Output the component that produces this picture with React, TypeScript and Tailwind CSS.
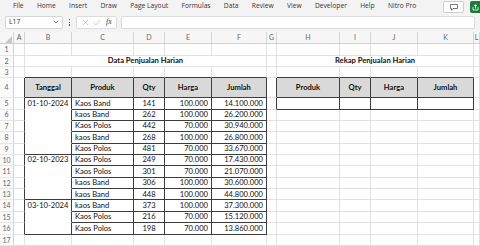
import React from "react";

const cols = ["", "A", "B", "C", "D", "E", "F", "G", "H", "I", "J", "K", "L"];

type Row = { tgl?: string; produk: string; qty: number; harga: string; jumlah: string };

const data: Row[] = [
  { tgl: "01-10-2024", produk: "Kaos Band", qty: 141, harga: "100.000", jumlah: "14.100.000" },
  { produk: "kaos Band", qty: 262, harga: "100.000", jumlah: "26.200.000" },
  { produk: "Kaos Polos", qty: 442, harga: "70.000", jumlah: "30.940.000" },
  { produk: "kaos Band", qty: 268, harga: "100.000", jumlah: "26.800.000" },
  { produk: "Kaos Polos", qty: 481, harga: "70.000", jumlah: "33.670.000" },
  { tgl: "02-10-2023", produk: "Kaos Polos", qty: 249, harga: "70.000", jumlah: "17.430.000" },
  { produk: "Kaos Polos", qty: 301, harga: "70.000", jumlah: "21.070.000" },
  { produk: "kaos Band", qty: 306, harga: "100.000", jumlah: "30.600.000" },
  { produk: "kaos Band", qty: 448, harga: "100.000", jumlah: "44.800.000" },
  { tgl: "03-10-2024", produk: "kaos Band", qty: 373, harga: "100.000", jumlah: "37.300.000" },
  { produk: "Kaos Polos", qty: 216, harga: "70.000", jumlah: "15.120.000" },
  { produk: "Kaos Polos", qty: 198, harga: "70.000", jumlah: "13.860.000" },
];

const menu = ["File", "Home", "Insert", "Draw", "Page Layout", "Formulas", "Data", "Review", "View", "Developer", "Help", "Nitro Pro"];

function darkRight(r: number, c: number) {
  if (r >= 4 && r <= 16 && c >= 1 && c <= 6) return true;
  if (r >= 4 && r <= 5 && c >= 7 && c <= 11) return true;
  return false;
}

function darkBottom(r: number, c: number) {
  if (c >= 2 && c <= 6) {
    if (r === 3) return true;
    if (r >= 4 && r <= 16) {
      if (c === 2) return [4, 9, 13, 16].includes(r);
      return true;
    }
  }
  if (c >= 8 && c <= 11 && r >= 3 && r <= 5) return true;
  return false;
}

function noBottom(r: number, c: number) {
  return c === 2 && r >= 5 && r <= 15 && ![9, 13].includes(r);
}

function cellText(r: number, c: number) {
  if (r === 4) {
    const h: Record<number, string> = { 2: "Tanggal", 3: "Produk", 4: "Qty", 5: "Harga", 6: "Jumlah", 8: "Produk", 9: "Qty", 10: "Harga", 11: "Jumlah" };
    return h[c] ? { t: h[c], cls: "justify-center font-bold" } : null;
  }
  if (r >= 5 && r <= 16) {
    const d = data[r - 5];
    if (c === 2 && d.tgl) return { t: d.tgl, cls: "justify-center" };
    if (c === 3) return { t: d.produk, cls: "justify-start pl-[3px]" };
    if (c === 4) return { t: String(d.qty), cls: "justify-center" };
    if (c === 5) return { t: d.harga, cls: "justify-end pr-[3px]" };
    if (c === 6) return { t: d.jumlah, cls: "justify-end pr-[3px]" };
  }
  return null;
}

function Cell({ r, c }: { r: number; c: number }) {
  if (c === 0) {
    return (
      <div className="flex items-center justify-center border-r border-b border-r-[#d4d4d4] border-b-[#e6e6e6] bg-[#fafafa] text-[7px] text-[#666]">
        {r}
      </div>
    );
  }
  const right = darkRight(r, c) ? "border-r-[#3c3c3c]" : "border-r-[#e1e1e1]";
  const bottom = darkBottom(r, c) ? "border-b-[#3c3c3c]" : noBottom(r, c) ? "border-b-white" : "border-b-[#e1e1e1]";
  const fill = r === 4 && ((c >= 2 && c <= 6) || (c >= 8 && c <= 11)) ? "bg-[#d9d9d9]" : "bg-white";
  const txt = cellText(r, c);
  return (
    <div className={`flex items-center overflow-hidden whitespace-nowrap border-r border-b ${right} ${bottom} ${fill} ${txt ? txt.cls : ""}`}>
      {txt ? txt.t : null}
    </div>
  );
}

function Sheet() {
  const rows: React.ReactNode[] = [];
  cols.forEach((l, c) => {
    rows.push(
      <div
        key={`h${c}`}
        className="flex items-center justify-center border-r border-b border-r-[#d4d4d4] border-b-[#cfcfcf] bg-[#f7f7f7] text-[7px] text-[#666]"
      >
        {c === 0 ? (
          <svg width="7" height="7" viewBox="0 0 7 7" className="ml-[3px] mt-[3px]">
            <path d="M7 0 L7 7 L0 7 Z" fill="#c8c8c8" />
          </svg>
        ) : (
          l
        )}
      </div>
    );
  });
  for (let r = 1; r <= 17; r++) {
    for (let c = 0; c < cols.length; c++) {
      if (r === 2 && c === 2) {
        rows.push(
          <div key={`${r}-${c}`} className="col-span-5 flex items-center justify-center border-r border-b border-r-[#e1e1e1] border-b-[#e1e1e1] font-bold">
            Data Penjualan Harian
          </div>
        );
        c = 6;
        continue;
      }
      if (r === 2 && c === 8) {
        rows.push(
          <div key={`${r}-${c}`} className="col-span-4 flex items-center justify-center border-r border-b border-r-[#e1e1e1] border-b-[#e1e1e1] font-bold">
            Rekap Penjualan Harian
          </div>
        );
        c = 11;
        continue;
      }
      rows.push(<Cell key={`${r}-${c}`} r={r} c={c} />);
    }
  }
  return (
    <div
      className="grid grid-cols-[14px_11px_47px_62px_31px_47px_55px_10px_63px_31px_47px_56px_1fr] grid-rows-[12px_11.4px_11.3px_11.4px_19.9px_repeat(12,11.36px)_1fr] flex-1 text-[7.6px] text-[#111]"
      style={{ fontFamily: "Lato, 'Noto Sans', sans-serif" }}
    >
      {rows}
    </div>
  );
}

export default function App() {
  return (
    <div className="w-[480px] h-[246px] overflow-hidden flex flex-col bg-white" style={{ fontFamily: "'Open Sans', 'Noto Sans', sans-serif" }}>
      <div className="h-[14px] flex items-center bg-[#f3f3f3] text-[6.7px] text-[#333] pl-[13px] gap-[13.3px] relative">
        {menu.map((m) => (
          <span key={m}>{m}</span>
        ))}
        <div className="absolute left-[443px] top-[1px] w-[21px] h-[12px] rounded-[2px] border border-[#cfcfcf] bg-white flex items-center justify-center">
          <svg width="8" height="7" viewBox="0 0 8 7">
            <path d="M0.5 0.5 H7.5 V4.5 H3 L1.5 6.3 V4.5 H0.5 Z" fill="none" stroke="#555" strokeWidth="0.8" />
          </svg>
        </div>
        <div className="absolute left-[470px] top-[1px] w-[14px] h-[12px] rounded-[2px] bg-[#1f7a3e] flex items-center pl-[2px]">
          <svg width="7" height="7" viewBox="0 0 7 7">
            <path d="M1 3 V6 H6 V3 M3.5 4.5 V0.8 M2 2 L3.5 0.8 L5 2" fill="none" stroke="#fff" strokeWidth="0.8" />
          </svg>
        </div>
      </div>
      <div className="h-[22px] flex items-center bg-[#f3f3f3] px-[5px] gap-[4px]">
        <div className="w-[58px] h-[13px] bg-white border border-[#d6d6d6] rounded-[2px] flex items-center justify-between px-[3px] text-[6.8px] text-[#333]">
          <span>L17</span>
          <svg width="6" height="4" viewBox="0 0 6 4">
            <path d="M0.8 0.8 L3 3 L5.2 0.8" fill="none" stroke="#555" strokeWidth="0.8" />
          </svg>
        </div>
        <div className="flex flex-col gap-[1.5px] px-[2px]">
          <span className="w-[1.2px] h-[1.2px] bg-[#555]" />
          <span className="w-[1.2px] h-[1.2px] bg-[#555]" />
          <span className="w-[1.2px] h-[1.2px] bg-[#555]" />
        </div>
        <div className="w-[41px] h-[13px] bg-white border border-[#dcdcdc] rounded-[2px] flex items-center justify-around px-[2px]">
          <svg width="7" height="7" viewBox="0 0 7 7">
            <path d="M1 1 L6 6 M6 1 L1 6" stroke="#bdbdbd" strokeWidth="0.8" />
          </svg>
          <svg width="8" height="7" viewBox="0 0 8 7">
            <path d="M0.8 3.8 L3 6 L7.2 1" fill="none" stroke="#bdbdbd" strokeWidth="0.8" />
          </svg>
          <span className="text-[8px] italic text-[#444]" style={{ fontFamily: "'Liberation Serif', serif" }}>
            fx
          </span>
        </div>
        <div className="flex-1 h-[13px] bg-white border border-[#dcdcdc] rounded-[2px]" />
      </div>
      <Sheet />
    </div>
  );
}
